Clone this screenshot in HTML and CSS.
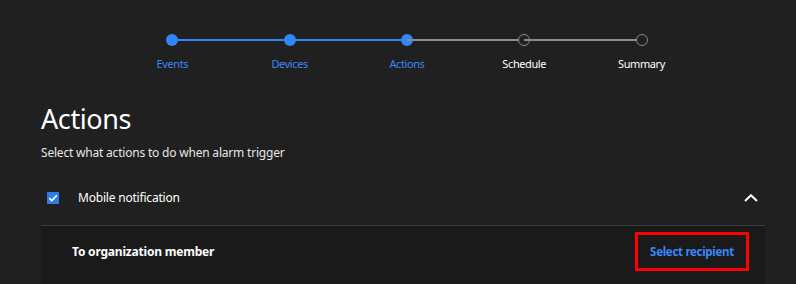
FILE: index.html
```html
<!DOCTYPE html>
<html>
<head>
<meta charset="utf-8">
<link rel="stylesheet" href="styles.css">
</head>
<body>
<div class="page">
  <ol class="stepper">
    <li class="step done first"><span class="dot"></span><span class="label">Events</span></li>
    <li class="step done"><span class="dot"></span><span class="label">Devices</span></li>
    <li class="step done"><span class="dot"></span><span class="label">Actions</span></li>
    <li class="step todo"><span class="dot"></span><span class="label">Schedule</span></li>
    <li class="step todo"><span class="dot"></span><span class="label">Summary</span></li>
  </ol>
  <h1 class="title">Actions</h1>
  <p class="subtitle">Select what actions to do when alarm trigger</p>
  <div class="section">
    <div class="section-head">
      <span class="checkbox"><svg width="12" height="12" viewBox="0 0 12 12"><path d="M2.3 6.2 L4.8 8.6 L9.8 3.4" fill="none" stroke="#fff" stroke-width="1.6"/></svg></span>
      <span class="section-name">Mobile notification</span>
      <svg class="chevron" width="14" height="8" viewBox="0 0 14 8"><path d="M1 7 L7 1.2 L13 7" fill="none" stroke="#fff" stroke-width="2"/></svg>
    </div>
    <div class="panel">
      <div class="panel-row">
        <span class="panel-label">To organization member</span>
        <button class="link-btn">Select recipient</button>
      </div>
    </div>
  </div>
</div>
</body>
</html>
```
FILE: styles.css
```css
html, body {
  margin: 0;
  padding: 0;
  background: #202020;
  color: #fff;
  font-family: "Noto Sans", "Open Sans", sans-serif;
}
.page {
  padding: 0 31px 0 41px;
}
.stepper {
  list-style: none;
  margin: 0;
  padding: 34px 0 0 72.7px;
  display: grid;
  grid-template-columns: repeat(5, 117.3px);
}
.step {
  position: relative;
  display: flex;
  flex-direction: column;
  align-items: center;
}
.step::before {
  content: "";
  position: absolute;
  top: 5px;
  right: 50%;
  width: 117.3px;
  height: 2px;
}
.step.first::before { display: none; }
.step.done::before { background: #2f86f6; }
.step.todo::before { background: #8c8c8c; }
.dot {
  position: relative;
  box-sizing: border-box;
  width: 12px;
  height: 12px;
  border-radius: 50%;
}
.done .dot { background: #2f86f6; }
.todo .dot { background: #202020; border: 1.5px solid #8c8c8c; }
.label {
  margin-top: 11px;
  font-size: 11px;
  line-height: 14px;
  letter-spacing: -0.4px;
}
.done .label { color: #3b86f7; }
.todo .label { color: #fff; }
.title {
  margin: 31px 0 0;
  font-size: 27px;
  font-weight: 400;
  line-height: 34px;
  letter-spacing: -0.4px;
}
.subtitle {
  margin: 9px 0 0;
  font-size: 12px;
  line-height: 16px;
  letter-spacing: -0.2px;
  color: #e6e6e6;
}
.section { margin-top: 11px; width: 724px; }
.section-head {
  display: flex;
  align-items: center;
  height: 51px;
  padding: 0 7px 2px 6px;
}
.checkbox {
  width: 12px;
  height: 12px;
  background: #2b7de9;
  border-radius: 1px;
  display: flex;
  align-items: center;
  justify-content: center;
}
.section-name {
  margin-left: 19px;
  font-size: 12px;
  letter-spacing: -0.2px;
  flex: 1;
}
.chevron { display: block; }
.panel {
  background: #1a1a1a;
  border-top: 1px solid #3c3c3c;
  padding: 0 16px 20px 31px;
}
.panel-row {
  height: 50px;
  display: flex;
  align-items: center;
  justify-content: space-between;
}
.panel-label {
  font-size: 12px;
  font-weight: 700;
  letter-spacing: -0.2px;
}
.link-btn {
  background: transparent;
  border: 3px solid #ff0000;
  color: #3b86f7;
  font-family: inherit;
  font-size: 11.5px;
  font-weight: 700;
  letter-spacing: -0.3px;
  width: 114px;
  height: 39px;
  padding: 0;
}
```
